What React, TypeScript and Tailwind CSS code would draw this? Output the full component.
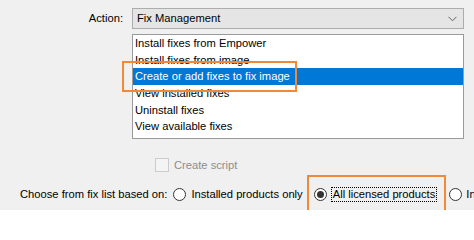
import React from 'react';

// Options of the action list
const FIXES = [
  'Install fixes from Empower',
  'Install fixes from image',
  'Create or add fixes to fix image',
  'View installed fixes',
  'Uninstall fixes',
  'View available fixes',
];

const SELECTED = 2;

const Radio: React.FC<{ checked?: boolean }> = ({ checked }) => (
  <span className="flex h-[13px] w-[13px] shrink-0 items-center justify-center rounded-full border border-[#333] bg-white">
    {checked && <span className="h-[7px] w-[7px] rounded-full bg-[#333]" />}
  </span>
);

const App: React.FC = () => {
  return (
    <div className="relative h-[210px] w-[474px] overflow-hidden bg-[#f0f0f0] text-[11.2px] text-black [font-family:'Liberation_Sans',Arial,sans-serif]">
      {/* Action row */}
      <div className="flex items-center pt-[8px]">
        <span className="w-[123px] text-right">Action:</span>
        <div className="ml-[9px] flex h-[21px] w-[332px] items-center justify-between border border-[#adadad] bg-[#e5e5e5] pl-[4px] pr-[6px]">
          <span>Fix Management</span>
          <svg width="9" height="6" viewBox="0 0 9 6" className="text-[#606060]">
            <path d="M0.5 0.8 L4.5 4.8 L8.5 0.8" fill="none" stroke="currentColor" strokeWidth="1" />
          </svg>
        </div>
      </div>

      {/* Fix list */}
      <div className="ml-[132px] mt-[5px] h-[105px] w-[332px] border border-[#9a9a9a] bg-white">
        {FIXES.map((label, i) => (
          <div
            key={label}
            className={
              i === SELECTED
                ? 'h-[16.67px] bg-[#0078d7] pl-[2px] leading-[16.67px] text-white'
                : 'h-[16.67px] pl-[2px] leading-[16.67px]'
            }
          >
            {label}
          </div>
        ))}
      </div>

      {/* Create script checkbox */}
      <div className="ml-[155px] mt-[18px] flex items-center gap-[5px] text-[#8d8d8d]">
        <span className="h-[14px] w-[14px] border border-[#cccccc] bg-[#f4f4f4]" />
        <span>Create script</span>
      </div>

      {/* Fix list source */}
      <div className="ml-[20px] mt-[12px] flex items-center whitespace-nowrap">
        <span>Choose from fix list based on:</span>
        <span className="ml-[6px] flex items-center gap-[5px]">
          <Radio />
          <span>Installed products only</span>
        </span>
        <span className="ml-[11px] flex items-center gap-[4px]">
          <Radio checked />
          <span className="border border-dotted border-black px-[1px] leading-[13px]">All licensed products</span>
        </span>
        <span className="ml-[12px] flex items-center gap-[4px]">
          <Radio />
          <span>Installed products</span>
        </span>
      </div>

      {/* Orange annotation boxes */}
      <div className="absolute left-[122px] top-[61px] h-[31px] w-[175px] border-2 border-[#ef8a3a]" />
      <div className="absolute left-[307px] top-[175px] h-[40px] w-[139px] border-2 border-[#ef8a3a]" />
    </div>
  );
};

export default App;
